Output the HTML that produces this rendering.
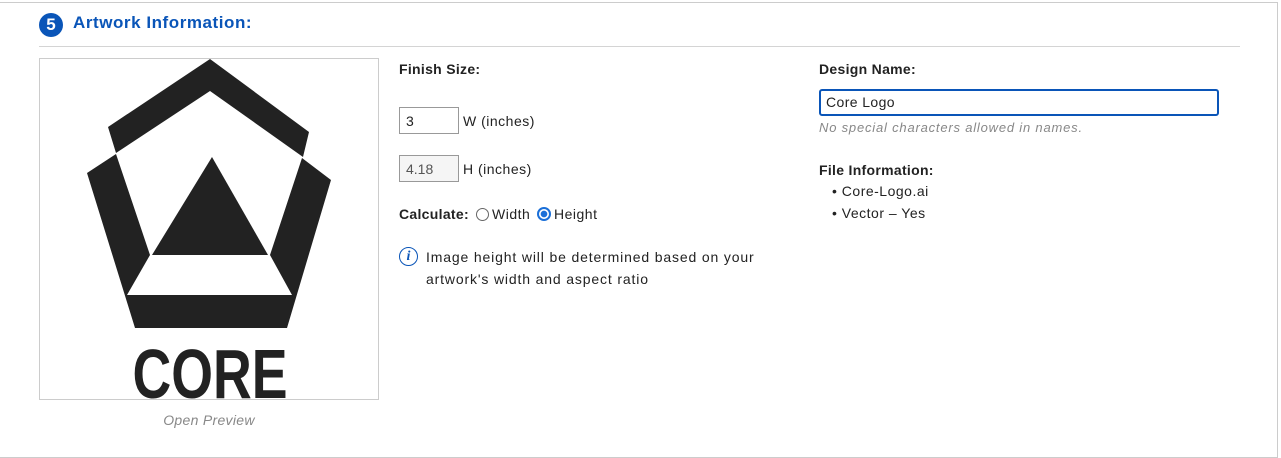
<!DOCTYPE html>
<html><head><style>
body{margin:0;width:1281px;height:458px;background:#fff;font-family:"Liberation Sans",sans-serif;color:#222;position:relative;overflow:hidden}
.a{position:absolute;white-space:nowrap}
.frame{position:absolute;left:0;top:2px;width:1277px;height:454px;border:1px solid #ccc;border-left:none}
.b{font-weight:bold;font-size:14px;letter-spacing:0.3px}
.t{font-size:14px;letter-spacing:0.5px}
.inp{position:absolute;border:1px solid #999;box-sizing:border-box;font-size:14px;padding:5px 0 0 6px}
</style></head><body>
<div class="frame"></div>
<div class="a" style="left:39px;top:13px;width:24px;height:24px;border-radius:50%;background:#0a55b8;color:#fff;font-weight:bold;font-size:17px;text-align:center;line-height:24px">5</div>
<div class="a" style="left:73px;top:13px;color:#0a55b8;font-weight:bold;font-size:17px;letter-spacing:0.55px">Artwork Information:</div>
<div class="a" style="left:39px;top:46px;width:1201px;height:1px;background:#d4d4d4"></div>
<div class="a" style="left:39px;top:58px;width:338px;height:340px;border:1px solid #ccc"></div>
<svg class="a" style="left:0;top:0" width="400" height="420">
<g fill="#222">
<polygon points="210,59 309,132 303,157 210,91 116,153 108,127"/>
<polygon points="87,173 116,154 150,255 127,295 292,295 270,255 302,158 331,180 287,328 135,328"/>
<polygon points="212,157 268,255 152,255"/>
<text x="210" y="398" text-anchor="middle" font-family="Liberation Sans, sans-serif" font-weight="bold" font-size="70" textLength="155" lengthAdjust="spacingAndGlyphs">CORE</text>
</g>
</svg>
<div class="a" style="left:39px;top:412px;width:340px;text-align:center;font-style:italic;font-size:14px;color:#888;letter-spacing:0.3px">Open Preview</div>

<div class="a b" style="left:399px;top:61px">Finish Size:</div>
<div class="inp" style="left:399px;top:107px;width:60px;height:27px">3</div>
<div class="a t" style="left:463px;top:113px">W (inches)</div>
<div class="inp" style="left:399px;top:155px;width:60px;height:27px;background:#f5f5f5;color:#555">4.18</div>
<div class="a t" style="left:463px;top:161px">H (inches)</div>
<div class="a t" style="left:399px;top:206px"><b style="letter-spacing:0.3px">Calculate:</b></div>
<div class="a" style="left:476px;top:208px;width:11px;height:11px;border:1px solid #666;border-radius:50%"></div>
<div class="a t" style="left:492px;top:206px">Width</div>
<div class="a" style="left:537px;top:207px;width:10px;height:10px;border:2px solid #1a6fd8;border-radius:50%;background:radial-gradient(circle,#1a6fd8 3px,#fff 3.6px)"></div>
<div class="a t" style="left:554px;top:206px">Height</div>
<div class="a" style="left:399px;top:247px;width:17px;height:17px;border:1.5px solid #0a55b8;border-radius:50%;color:#0a55b8;font-style:italic;font-weight:bold;font-family:'Liberation Serif',serif;font-size:14px;text-align:center;line-height:18px">i</div>
<div class="a t" style="left:426px;top:246px;line-height:22px;letter-spacing:0.85px">Image height will be determined based on your<br>artwork's width and aspect ratio</div>

<div class="a b" style="left:819px;top:61px">Design Name:</div>
<div class="a" style="left:819px;top:89px;width:400px;height:27px;border:2px solid #0a55b8;border-radius:3px;box-sizing:border-box;font-size:14px;padding:3px 0 0 5px;letter-spacing:0.4px">Core Logo</div>
<div class="a" style="left:819px;top:120px;font-size:13px;font-style:italic;color:#888;letter-spacing:0.8px">No special characters allowed in names.</div>
<div class="a b" style="left:819px;top:162px">File Information:</div>
<div class="a t" style="left:832px;top:183px">• Core-Logo.ai</div>
<div class="a t" style="left:832px;top:205px">• Vector – Yes</div>
</body></html>
